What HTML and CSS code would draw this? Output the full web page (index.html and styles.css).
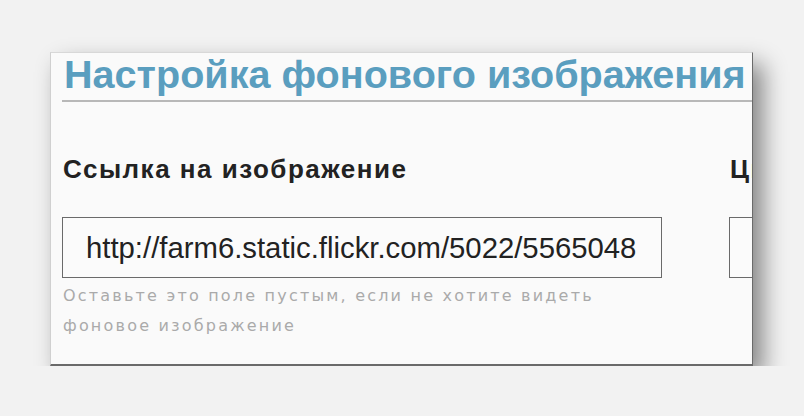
FILE: index.html
```html
<!DOCTYPE html>
<html lang="ru">

<head>
    <meta charset="UTF-8">
    <meta name="viewport" content="width=device-width, initial-scale=1.0">
    <title>Настройка фонового изображения</title>
    <link rel="stylesheet" href="styles.css">
</head>

<body>

    <div class="panel">
        <h1 class="title">Настройка фонового изображения</h1>

        <div class="fields">
            <div class="field field-url">
                <label class="label" for="bgUrl">Ссылка на изображение</label>
                <input class="text-input" type="text" id="bgUrl" value="http://farm6.static.flickr.com/5022/5565048">
                <p class="hint">Оставьте это поле пустым, если не хотите видеть фоновое изображение</p>
            </div>

            <div class="field field-color">
                <label class="label" for="bgColor">Цвет фона</label>
                <input class="text-input" type="text" id="bgColor" value="">
            </div>
        </div>
    </div>

</body>

</html>
```

FILE: styles.css
```css
body {
    font-family: 'Liberation Sans', Arial, sans-serif;
    margin: 0;
    padding: 52px 0 0 50px;
    background: #f2f2f2;
    color: #222;
}

.panel {
    width: 690px;
    height: 311px;
    background-color: #fafafa;
    border-top: 1px solid #d8d8d8;
    border-left: 1px solid #d0d0d0;
    border-right: 1px solid #6a6a6a;
    border-bottom: 2px solid #6a6a6a;
    box-shadow: 10px 12px 22px rgba(0, 0, 0, 0.45);
    overflow: hidden;
    padding-left: 11px;
}

.title {
    margin: 0;
    padding: 0 0 5px 2px;
    font-size: 39.6px;
    line-height: 42px;
    font-weight: bold;
    color: #5a9ebf;
    border-bottom: 2px solid #b8b8b8;
    white-space: nowrap;
}

.fields {
    display: flex;
    gap: 67px;
    margin-top: 52px;
}

.field {
    flex-shrink: 0;
}

.field-url {
    width: 600px;
}

.field-color {
    width: 200px;
}

.label {
    display: block;
    font-size: 26px;
    line-height: 30px;
    letter-spacing: 1.5px;
    font-weight: bold;
    color: #222;
    margin: 0 0 33px 1px;
    white-space: nowrap;
}

.text-input {
    box-sizing: border-box;
    width: 600px;
    height: 61px;
    padding: 0 23px;
    border: 1px solid #6a6a6a;
    background: #fbfbfb;
    font-family: 'Liberation Sans', Arial, sans-serif;
    font-size: 29.3px;
    color: #222;
}

.hint {
    width: 560px;
    margin: 3px 0 0 1px;
    font-family: 'DejaVu Sans', 'Liberation Sans', sans-serif;
    font-size: 16px;
    line-height: 30px;
    letter-spacing: 2.2px;
    color: #aaa;
}
```
